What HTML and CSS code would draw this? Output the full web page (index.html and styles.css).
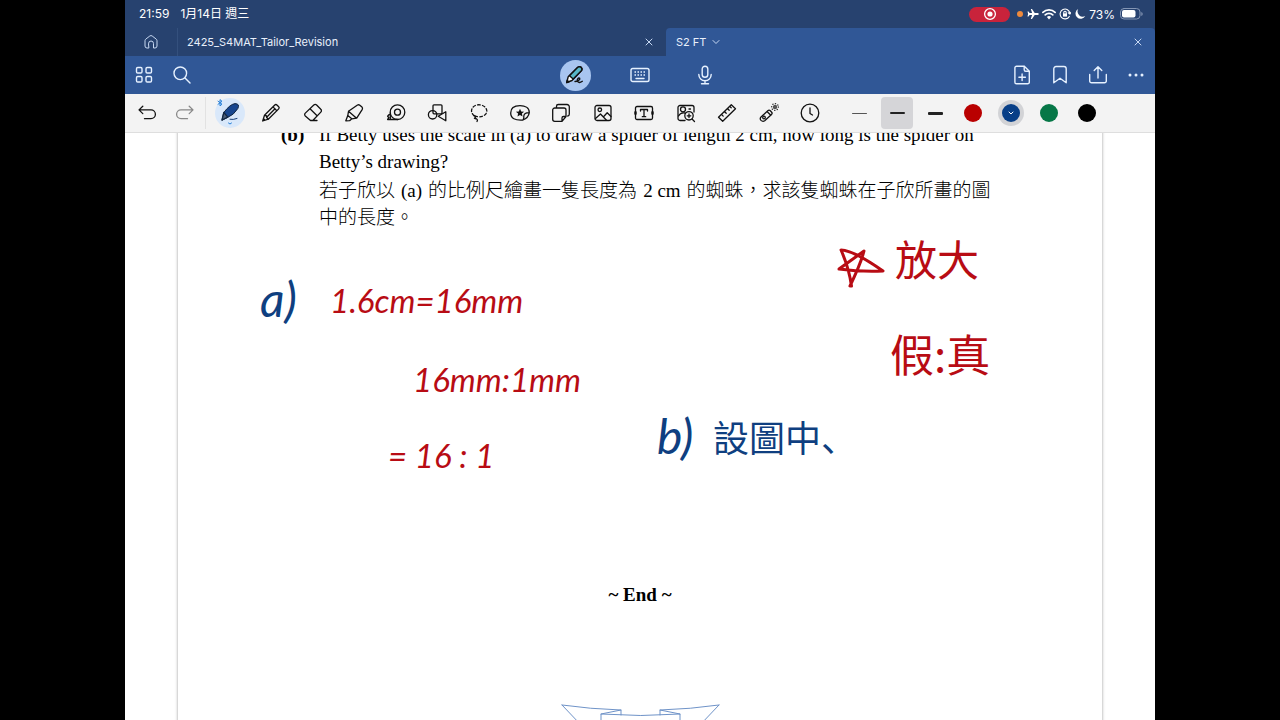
FILE: index.html
```html
<!DOCTYPE html>
<html lang="zh-Hant">
<head>
<meta charset="utf-8">
<title>S2 FT</title>
<link rel="stylesheet" href="styles.css">
</head>
<body>
<div class="app">
  <header class="status">
    <div class="status-left"><span>21:59</span><span>1月14日 週三</span></div>
    <div class="status-right">
      <span class="record"><svg class="i14" viewBox="0 0 14 14"><circle cx="7" cy="7" r="5.4" fill="none" stroke="#fff" stroke-width="1.3"/><circle cx="7" cy="7" r="2.6" fill="#fff"/></svg></span>
      <span class="mic-dot"></span>
      <svg class="i12" viewBox="0 0 12 12"><path fill="#fff" d="M11.8 6c0 .6-.8 1-1.7 1H7.7L5 11H3.8l1.3-4H2.6L1.5 8.500H.5L1.100 6 .5 3.500h1L2.600 5h2.500L3.800 1H5l2.700 4h2.400c.9 0 1.700.4 1.700 1z"/></svg>
      <svg class="i14" viewBox="0 0 14 14"><g fill="none" stroke="#fff" stroke-width="1.7"><path d="M.9 5.400a8.700 8.700 0 0 1 12.200 0"/><path d="M3.200 7.900a5.400 5.400 0 0 1 7.600 0"/></g><path fill="#fff" d="M7 12.400 4.900 10.100a3 3 0 0 1 4.200 0z"/></svg>
      <svg class="i12" viewBox="0 0 12 12"><g fill="none" stroke="#fff" stroke-width="1.100"><path d="M10.300 8.400A4.900 4.900 0 1 1 10.900 5.500"/><path d="m9.300 4.800 1.600 1.300 1-1.800"/><path d="M4.800 5.600V4.500a1.200 1.200 0 0 1 2.400 0v1.100"/></g><path fill="#fff" d="M4 5.400h4v3.200H4z"/></svg>
      <svg class="i12" viewBox="0 0 12 12"><path fill="#fff" d="M4.200 1A5.200 5.200 0 1 0 11.300 8 5.200 5.200 0 0 1 4.200 1z"/></svg>
      <span>73%</span>
      <svg class="battery" viewBox="0 0 23 12"><rect x=".5" y=".5" width="19.500" height="10.500" rx="3.500" fill="none" stroke="#8496b4"/><rect x="2" y="2" width="13.500" height="7.500" rx="2" fill="#fff"/><path d="M21.300 4v4q1.400-.6 1.400-2t-1.400-2z" fill="#8496b4"/></svg>
    </div>
  </header>

  <nav class="tabs">
    <button class="home" aria-label="Home"><svg class="i16" viewBox="0 0 16 16"><path d="M5.500 14H4a2 2 0 0 1-2-2V6.700a2 2 0 0 1 .8-1.600l4-3.100a2 2 0 0 1 2.400 0l4 3.100a2 2 0 0 1 .8 1.600V12a2 2 0 0 1-2 2h-1.500V9.500a2.500 2.500 0 0 0-5 0z"/></svg></button>
    <div class="tab"><button class="tab-name">2425_S4MAT_Tailor_Revision</button><button class="close" aria-label="Close tab"><svg class="i8" viewBox="0 0 8 8"><path d="m1 1 6 6M7 1 1 7"/></svg></button></div>
    <div class="tab active"><button class="tab-name">S2 FT <svg class="i8" viewBox="0 0 8 8"><path d="m1 2.500 3 3 3-3"/></svg></button><button class="close" aria-label="Close tab"><svg class="i8" viewBox="0 0 8 8"><path d="m1 1 6 6M7 1 1 7"/></svg></button></div>
  </nav>

  <div class="main-bar">
    <div class="group">
      <button class="act" aria-label="Pages"><svg class="i20" viewBox="0 0 20 20"><rect x="2.500" y="2.500" width="5.500" height="5.500" rx="1.200"/><rect x="12" y="2.500" width="5.500" height="5.500" rx="1.200"/><rect x="2.500" y="11.500" width="5.500" height="5.500" rx="1.200"/><rect x="12" y="11.500" width="5.500" height="5.500" rx="1.200"/></svg></button>
      <button class="act" aria-label="Search"><svg class="i20" viewBox="0 0 20 20"><circle cx="8.300" cy="8.300" r="6.300"/><path d="m13 13 5 5"/></svg></button>
    </div>
    <div class="group modes">
      <button class="act on" aria-label="Write"><svg class="i20" viewBox="0 0 20 20"><path d="m1.700 17.500 1.500-5.700L12.800 2.300q1.800-1.300 3.400.1 1.500 1.600.1 3.300L7 15.500z" fill="#fff" stroke="#111"/><path d="M4.500 10.700 12.800 2.300q1.800-1.300 3.400.1 1.500 1.600.1 3.300L8.200 14z" fill="#57b6c8" stroke="#111"/><path d="m1.700 17.500.5-2.200 1.700 1.600z" fill="#111" stroke="#111"/><path d="M10 16.500c2.500 0 5.500-1.800 4.700-3.200-.9-1.100-3 .6-2.200 2.800.5 1.700 2.600 1.800 4.800.2" stroke="#111"/></svg></button>
      <button class="act" aria-label="Keyboard"><svg class="i20" viewBox="0 0 20 20"><rect x="1" y="3.500" width="18" height="13" rx="1.800"/><path d="M6 13.500h8"/><path d="M4.500 7h11.500M4.500 10h11.500" stroke-linecap="butt" stroke-dasharray="1.500 1.500"/></svg></button>
      <button class="act" aria-label="Record audio"><svg class="i20" viewBox="0 0 20 20"><rect x="7.200" y="1.200" width="5.600" height="11" rx="2.800"/><path d="M3.800 9.500a6.200 6.200 0 0 0 12.400 0M10 15.700v3M6.500 18.700h7"/></svg></button>
    </div>
    <div class="group end">
      <button class="act" aria-label="Add page"><svg class="i20" viewBox="0 0 20 20"><path d="M4.500 1.200h7.800l5 5v11a1.600 1.600 0 0 1-1.600 1.600H4.500a1.600 1.600 0 0 1-1.600-1.600V2.800a1.600 1.600 0 0 1 1.600-1.600z"/><path d="M12.200 1.500v3.200a1.500 1.500 0 0 0 1.500 1.500H17M10.100 9v6.500M6.900 12.200h6.500"/></svg></button>
      <button class="act" aria-label="Bookmark"><svg class="i20" viewBox="0 0 20 20"><path d="M3.800 17.800V3.700A2.200 2.200 0 0 1 6 1.500h8a2.200 2.200 0 0 1 2.200 2.200v14.100L10 13.200z"/></svg></button>
      <button class="act" aria-label="Share"><svg class="i20" viewBox="0 0 20 20"><path d="M1.700 9.500V16A1.800 1.800 0 0 0 3.500 17.800h13A1.800 1.800 0 0 0 18.300 16V9.500M10 13V2M6.200 5.500 10 1.700l3.800 3.800"/></svg></button>
      <button class="act" aria-label="More"><svg class="i20" viewBox="0 0 20 20"><g fill="#e6f1ff" stroke="none"><circle cx="4" cy="10" r="1.500"/><circle cx="10" cy="10" r="1.500"/><circle cx="16" cy="10" r="1.500"/></g></svg></button>
    </div>
  </div>

  <div class="tool-bar">
    <div class="history">
      <button class="tool" aria-label="Undo"><svg class="i20" viewBox="0 0 20 20"><path d="M5.800 3.200 2 6.900l3.800 3.700M2.300 6.900H14a4.400 4.400 0 0 1 0 8.800H7.500"/></svg></button>
      <button class="tool dim" aria-label="Redo" disabled><svg class="i20" viewBox="0 0 20 20"><path d="M14.200 3.200 18 6.900l-3.800 3.700M17.700 6.900H6a4.400 4.400 0 0 0 0 8.800h6.500"/></svg></button>
    </div>
    <div class="tools">
      <button class="tool pen" aria-label="Pen"><svg class="i28" viewBox="0 0 28 28"><path d="m6 21 1.800-7.500Q14 5.300 19 4.600q5.200.2 2.800 5Q18 16 11.500 18.500z" fill="#17468f" stroke="#112642" stroke-width="1"/><path d="m6 21 1.800-7.500 4 4.700z" fill="#4c5f79" stroke="#112642"/><path d="M14 20.300q3 .7 7-.8" stroke="#163e79" stroke-width="1"/><path d="m12.500 24 1.500 1 1.500-1" stroke="#2680d9" stroke-width="1"/><path d="m2 2.200 4 3-2 1.700V.6l2 1.700-4 3" stroke="#2680d9" stroke-width="1"/></svg></button>
      <button class="tool" aria-label="Pencil"><svg class="i20" viewBox="0 0 20 20"><path d="m1.700 18 1.800-5.700L13.800 2a1.500 1.500 0 0 1 2.100 0l1.800 1.800a1.500 1.500 0 0 1 0 2.100L7.300 16.200zM3.500 12.300l1.800.4.400 1.800 1.600 1.700M12 3.900l3.800 3.800M14 5.800l-8.300 8.400M1.700 18l.8-2.400 1.700 1.600z"/></svg></button>
      <button class="tool" aria-label="Eraser"><svg class="i20" viewBox="0 0 20 20"><path d="M7.500 17.500 2.300 13a2 2 0 0 1 0-2.900L10.800 2a2 2 0 0 1 2.800 0l4.200 4.200a2 2 0 0 1 0 2.900l-8 8.400zM7 5.700l7.100 7M7.500 17.500H14"/></svg></button>
      <button class="tool" aria-label="Highlighter"><svg class="i20" viewBox="0 0 20 20"><path d="m1.800 17.800 2-5.300.7-4.200L13.500 2q1.300-.6 2.300.2l2.200 1.900q.9.900.3 2.200l-5.600 8.900-4.900.6-2.200 1.900zM4.500 8.300l7.800 6.700M3.800 12.500l4 3.200"/></svg></button>
      <button class="tool" aria-label="Tape"><svg class="i20" viewBox="0 0 20 20"><circle cx="11.500" cy="9.200" r="7.300"/><circle cx="11.500" cy="9.200" r="3"/><path d="M4.300 10v6.500M11.500 16.500H1.600l1.300-1.800-1.300-1.500 1.300-1.500h1.200"/></svg></button>
      <button class="tool" aria-label="Shapes"><svg class="i20" viewBox="0 0 20 20"><rect x="6" y="1.800" width="9" height="9" rx="1"/><circle cx="5.600" cy="11.800" r="4.200"/><path d="M18.800 8.800v9l-7.600-4.500z" fill="#f3f3f3"/></svg></button>
      <button class="tool" aria-label="Lasso"><svg class="i20" viewBox="0 0 20 20"><path stroke-dasharray="2.600 2.300" d="M5 12.700C-1 7 5 1 11 1.800s9 6.500 5 10c-3.500 2.800-8 2.200-11 1"/><path d="M5.200 12.500q2.800 1.300.2 2.700M6 15.500q3.500.5 2 3"/></svg></button>
      <button class="tool" aria-label="Stickers"><svg class="i20" viewBox="0 0 20 20"><path d="M13 17C5 17.500.7 15.500.7 10S5 2.700 10 2.700s9.300 1.800 9.300 7q-1 5.500-6.300 7.300zM19.300 9.700q-5-.2-5.500 3.300.4 2-.8 4"/><path fill="#111" stroke="none" d="m10 5.800 1.200 2.600 2.900.3-2.200 1.900.6 2.800-2.500-1.500-2.500 1.500.6-2.800-2.200-1.900 2.900-.3z"/></svg></button>
      <button class="tool" aria-label="Sticky note"><svg class="i20" viewBox="0 0 20 20"><path d="M5.500 4V3.300A1.800 1.800 0 0 1 7.300 1.500H16a2.300 2.300 0 0 1 2.300 2.300V11a2 2 0 0 1-1.500 2M11 18.300H3.700a2 2 0 0 1-2-2V7a2 2 0 0 1 2-2H13a2 2 0 0 1 2 2v6.500zM15 13.500h-2.500a1.500 1.500 0 0 0-1.500 1.500v3.300"/></svg></button>
      <button class="tool" aria-label="Image"><svg class="i20" viewBox="0 0 20 20"><rect x="2" y="2.500" width="16" height="15" rx="2"/><circle cx="6.800" cy="6.800" r="1.800"/><path d="m2.500 15.500 5-4.500 6 6.300M10.500 13.800l3.700-4 3.800 3.700"/></svg></button>
      <button class="tool" aria-label="Text"><svg class="i20" viewBox="0 0 20 20"><rect x="1.500" y="3.500" width="17" height="13" rx="1.500"/><path d="M6.500 8V6.500h7V8M10 6.500v7M8.300 13.700h3.400"/><path d="M1.500 9.300v1.400M18.500 9.300v1.400" stroke-width="2.400"/></svg></button>
      <button class="tool" aria-label="Image search"><svg class="i20" viewBox="0 0 20 20"><path d="M9 17.500H4a2 2 0 0 1-2-2v-11a2 2 0 0 1 2-2h12a2 2 0 0 1 2 2V9"/><circle cx="7" cy="6.300" r="2.500"/><path d="M2.500 13q2-4 6.500-3"/><circle cx="13" cy="12.800" r="4.200"/><path d="m16 16 2.500 2.500M13 11v3.600M11.200 12.800h3.600M13 6h1.500"/></svg></button>
      <button class="tool" aria-label="Ruler"><svg class="i20" viewBox="0 0 20 20"><path d="m1.500 14.200 12.800-12.500 4.200 4L5.700 18.300zM4.500 11.400l1.700 1.700M7.500 8.500l1.700 1.700M10.500 5.500l1.700 1.700M12.800 3.400l1.400 1.400"/></svg></button>
      <button class="tool" aria-label="Laser pointer"><svg class="i20" viewBox="0 0 20 20"><path d="m1.800 14.200 7-6.500a1.800 1.800 0 0 1 2.500 0L12.500 9a1.800 1.800 0 0 1 0 2.500l-6.800 6.300q-2 1.200-3.700-.4-1.400-1.500-.2-3.200zM8 8.500l3.800 3.700"/><circle cx="5" cy="14.500" r="1.300"/><circle cx="16" cy="4" r="1.600" fill="#555" stroke="#555"/><circle cx="16" cy="4" r="3.400" stroke-dasharray=".2 2.470" stroke="#333"/></svg></button>
      <button class="tool" aria-label="History"><svg class="i20" viewBox="0 0 20 20"><circle cx="10" cy="10" r="8.800"/><path d="M10 5v5.500l2.500 1.500"/></svg></button>
    </div>
    <div class="options">
      <button class="opt" aria-label="Thin stroke"><span class="line thin"></span></button>
      <button class="opt picked" aria-label="Medium stroke"><span class="line mid"></span></button>
      <button class="opt" aria-label="Thick stroke"><span class="line thick"></span></button>
      <button class="opt" aria-label="Red"><span class="dot red"></span></button>
      <button class="opt" aria-label="Blue"><span class="dot blue"><svg class="i8" viewBox="0 0 8 8"><path d="m2 3 2 2 2-2"/></svg></span></button>
      <button class="opt" aria-label="Green"><span class="dot green"></span></button>
      <button class="opt" aria-label="Black"><span class="dot black"></span></button>
    </div>
  </div>

  <main class="viewport">
    <article class="sheet">
      <section class="question">
        <b class="part">(b)</b>
        <div class="wording">
          <p>If Betty uses the scale in (a) to draw a spider of length 2 cm, how long is the spider on<br>Betty’s drawing?</p>
          <p class="zh">若子欣以<span class="latin">(a)</span>的比例尺繪畫一隻長度為<span class="latin">2 cm</span>的蜘蛛，求該隻蜘蛛在子欣所畫的圖<br>中的長度。</p>
        </div>
      </section>
      <p class="finish">~ End ~</p>
      <svg class="ribbon" viewBox="0 0 160 40"><path d="M2 1q28 4 59 5v5M2 1l19 20M61 6 41 10M41 30V10q40 3 79 0v20M159 1q-28 4-59 5v5M159 1l-19 20M100 6l20 4"/></svg>

      <div class="ink">
        <span class="note blue-ink n-a">a)</span>
        <span class="note n-a1">1.6cm=16mm</span>
        <span class="note n-a2">16mm:1mm</span>
        <span class="note n-a3">= 16 : 1</span>
        <svg class="star" viewBox="0 0 50 50"><path d="M15.500 46 Q13 28 5 10 Q17 10 47 31 Q25 32 3 29 L28 11 Q25 23 14 46"/></svg>
        <span class="note zh-ink n-zoom">放大</span>
        <span class="note zh-ink n-ratio">假:真</span>
        <span class="note blue-ink n-b">b)</span>
        <span class="note blue-ink zh-ink n-b1">設圖中<span class="comma" lang="zh-Hans">、</span></span>
      </div>
    </article>
  </main>
</div>
</body>
</html>
```
FILE: styles.css
```css
* { box-sizing: border-box; }
body { margin: 0; padding: 0 125px; background: #000; font-family: Inter, "Noto Sans CJK TC", sans-serif; }
p { margin: 0; }
button { margin: 0; padding: 0; border: 0; background: none; color: inherit; font: inherit; display: flex; align-items: center; justify-content: center; }
svg { display: block; flex: none; fill: none; stroke-linecap: round; stroke-linejoin: round; }
.i8 { width: 8px; height: 8px; }
.i12 { width: 12px; height: 12px; }
.i14 { width: 14px; height: 14px; }
.i16 { width: 16px; height: 16px; }
.i20 { width: 20px; height: 20px; }
.i28 { width: 28px; height: 28px; }

.app { height: 100vh; display: flex; flex-direction: column; overflow: hidden; background: #fff; }

.status { display: flex; justify-content: space-between; align-items: center; height: 28px; padding: 0 12px 0 14px; background: #27426f; color: #fff; font-size: 12px; }
.status-left { display: flex; align-items: center; gap: 11px; line-height: 16px; }
.status-right { display: flex; align-items: center; gap: 3px; }
.record { display: flex; align-items: center; justify-content: center; width: 41px; height: 15px; border-radius: 8px; background: #c9233b; }
.mic-dot { width: 6px; height: 6px; margin: 0 1px 0 4px; border-radius: 50%; background: #ef8a3c; }
.battery { width: 23px; height: 12px; margin-left: 2px; }

.tabs { display: flex; height: 28px; background: #27426f; color: #e9f0fb; font-size: 11px; }
.tabs svg { stroke: #c7d8f2; stroke-width: 1; }
.home { width: 52px; }
.tab { flex: 1; display: flex; align-items: center; justify-content: space-between; padding: 0 13px 0 10px; }
.tab:not(.active) { box-shadow: inset 1px 0 #34507d; }
.tab.active { background: #305796; border-radius: 4px 4px 0 0; }
.tab-name { gap: 6px; }

.main-bar { display: grid; grid-template-columns: 1fr auto 1fr; align-items: center; height: 38px; background: #305796; }
.main-bar svg { stroke: #e6f1ff; stroke-width: 1.4; }
.group { display: flex; }
.end { justify-content: flex-end; }
.act { width: 38px; height: 32px; }
.modes { gap: 27px; }
.on { position: relative; z-index: 0; }
.on::before { content: ""; position: absolute; z-index: -1; width: 31px; height: 31px; border-radius: 50%; background: #a8c5f0; }

.tool-bar { display: flex; align-items: center; height: 39px; padding: 0 52px 0 3px; background: #f3f3f3; border-bottom: 1px solid #dedede; color: #111; }
.tool-bar svg { stroke: #111; stroke-width: 1.3; }
.history { display: flex; padding-right: 1px; border-right: 1px solid #e2e2e2; }
.history .tool { width: 38px; height: 32px; }
.tool-bar .dim svg { stroke: #888; }
.tools { flex: 1; display: flex; margin: 0 12px 0 3px; }
.tools .tool { flex: 1; height: 32px; }
.pen { position: relative; z-index: 0; }
.pen::before { content: ""; position: absolute; z-index: -1; width: 30px; height: 30px; border-radius: 50%; background: #d9e8fa; }
.options { display: flex; gap: 6px; }
.opt { width: 32px; height: 32px; border-radius: 4px; }
.picked { background: #d5d5d8; }
.line { width: 15px; background: #222; border-radius: 1px; }
.thin { height: 1px; background: #555; }
.mid { height: 2px; }
.thick { height: 3px; }
.dot { display: flex; align-items: center; justify-content: center; width: 18px; height: 18px; border-radius: 50%; }
.red { background: #b90000; }
.blue { background: #083f87; box-shadow: 0 0 0 4px #d2d3d6; }
.green { background: #067747; }
.black { background: #000; }
.tool-bar .dot svg { stroke: #fff; stroke-width: 1; }

.viewport { flex: 1; min-height: 0; overflow: hidden; padding: 0 53px; }
.sheet { position: relative; min-height: 100%; margin-top: -12px; background: #fff; box-shadow: 0 0 3px #999; font-family: "Liberation Serif", "Noto Sans CJK TC", serif; font-size: 19px; color: #000; }
.question { display: flex; padding-left: 103px; line-height: 27px; }
.part { flex: none; width: 38px; }
.wording { white-space: nowrap; }
.zh { font-family: "Noto Sans CJK TC", sans-serif; font-weight: 300; }
.latin { margin: 0 6px; font-family: "Liberation Serif", serif; font-weight: 400; line-height: 1; }
.finish { padding-top: 354px; text-align: center; font-weight: 700; line-height: 24px; }
.ribbon { width: 160px; height: 40px; margin: 97px auto 0; stroke: #6f93c8; stroke-width: 1; }

/* Handwriting sits freely over the printed sheet. */
.ink { position: absolute; inset: 0; }
.note { position: absolute; white-space: nowrap; font-family: Lato, sans-serif; font-style: italic; font-size: 33px; line-height: 48px; color: #b80c14; }
.blue-ink { color: #0f3f80; }
.zh-ink { font-family: "Noto Sans CJK TC", sans-serif; font-style: normal; }
.n-a { left: 82px; top: 154px; font-size: 48px; }
.n-a1 { left: 152px; top: 155px; }
.n-a2 { left: 235px; top: 234px; }
.n-a3 { left: 210px; top: 310px; }
.star { position: absolute; left: 658px; top: 119px; width: 50px; height: 50px; stroke: #b80c14; stroke-width: 3; }
.n-zoom { left: 717px; top: 113px; font-size: 42px; }
.n-ratio { left: 712px; top: 208px; font-size: 44px; }
.n-b { left: 479px; top: 291px; font-size: 48px; }
.n-b1 { left: 535px; top: 291px; font-size: 36px; }
.comma { font-family: "Noto Sans CJK SC", sans-serif; }
```
